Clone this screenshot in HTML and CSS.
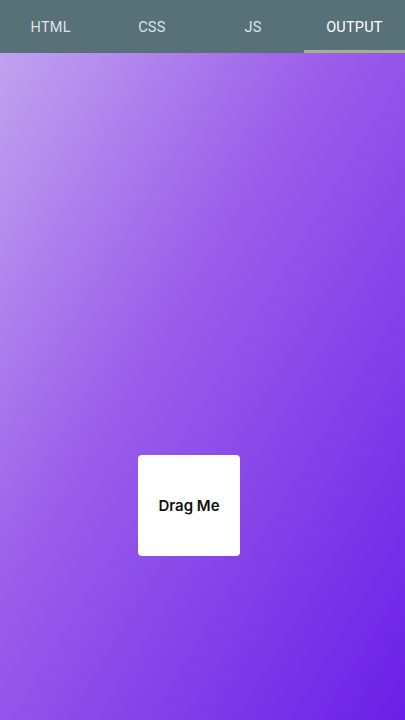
FILE: index.html
```html
<!DOCTYPE html>
<html>
<head>
<meta charset="utf-8">
<link rel="stylesheet" href="styles.css">
</head>
<body>
<nav class="tabs">
  <div class="tab">HTML</div>
  <div class="tab">CSS</div>
  <div class="tab">JS</div>
  <div class="tab active">OUTPUT</div>
</nav>
<main class="output">
  <div class="drag-box">Drag Me</div>
</main>
</body>
</html>
```
FILE: styles.css
```css
html, body {
  margin: 0;
  padding: 0;
  height: 100%;
}
body {
  display: flex;
  flex-direction: column;
  font-family: Roboto, "Liberation Sans", sans-serif;
  overflow: hidden;
}
.tabs {
  display: grid;
  grid-template-columns: repeat(4, 1fr);
  height: 53px;
  background: #587178;
  flex: none;
}
.tab {
  display: flex;
  align-items: center;
  justify-content: center;
  color: #dce4e8;
  font-size: 14.5px;
  font-weight: 400;
  letter-spacing: 0.2px;
  padding-top: 4px;
  box-sizing: border-box;
  border-bottom: 3px solid transparent;
}
.tab.active {
  color: #ffffff;
  border-bottom-color: #a4b28c;
}
.output {
  flex: 1;
  background: linear-gradient(to bottom right, #c0a3ef 0%, #9b5fea 40%, #6a20e7 100%);
  padding: 402px 0 0 138px;
}
.drag-box {
  width: 102px;
  height: 101px;
  background: #ffffff;
  border-radius: 4px;
  display: flex;
  align-items: center;
  justify-content: center;
  font-family: Inter, "Noto Sans", sans-serif;
  font-weight: 600;
  font-size: 15px;
  color: #111111;
}
```
